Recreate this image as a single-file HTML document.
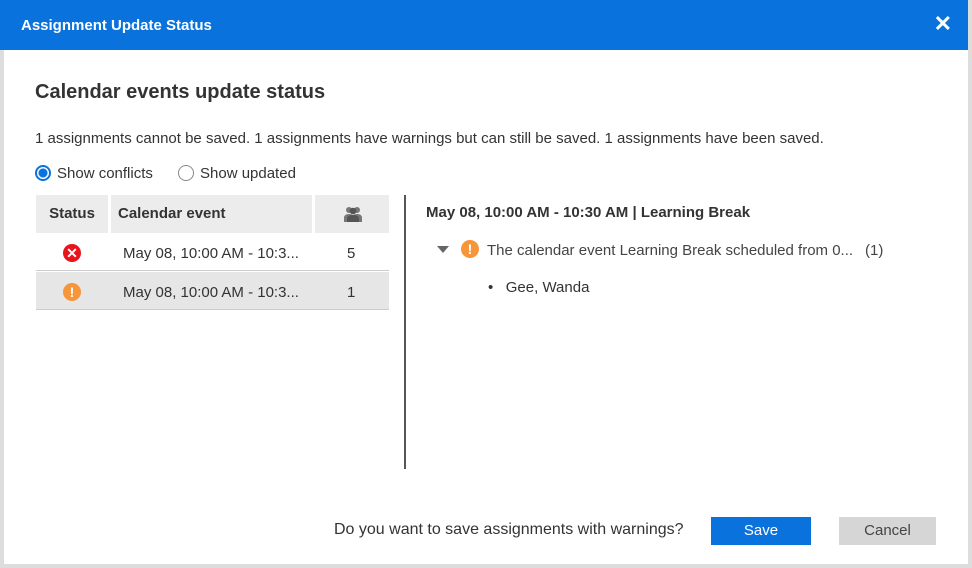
<!DOCTYPE html>
<html><head><style>
*{box-sizing:border-box;margin:0;padding:0}
body{width:972px;height:568px;background:#ddd;font-family:"Liberation Sans",sans-serif;color:#333;position:relative;overflow:hidden}
.dlg{position:absolute;left:0;top:0;width:968px;height:564px;background:#fff}
.side{position:absolute;left:0;top:50px;width:4px;height:518px;background:#ddd}
.hdr{height:50px;background:#0a72dc;color:#fff;font-weight:bold;font-size:15px;padding:17px 0 0 21px;position:relative}
.x{position:absolute;right:16px;top:14px;font-size:22px;line-height:20px}
.abs{position:absolute}
h1{position:absolute;left:35px;top:81px;font-size:20px;font-weight:bold;color:#333}
.t14{font-size:15px}
.radio{display:inline-block;width:16px;height:16px;border-radius:50%;border:1px solid #888;vertical-align:-3px;margin-right:6px}
.on{border:2px solid #0a72dc;background:radial-gradient(circle,#0a72dc 4px,#fff 5px)}
.th{background:#ececec;font-weight:bold;font-size:15px;height:38px}
.ic{display:inline-block;width:18px;height:18px;border-radius:50%;color:#fff;font-weight:bold;font-size:14px;line-height:18px;text-align:center}
.btn{position:absolute;height:28px;font-size:15px;text-align:center;line-height:28px}
</style></head><body>
<div class="dlg">
<div class="hdr">Assignment Update Status<span class="x">✕</span></div>
<h1>Calendar events update status</h1>
<div class="abs t14" style="left:35px;top:130px">1 assignments cannot be saved. 1 assignments have warnings but can still be saved. 1 assignments have been saved.</div>
<div class="abs t14" style="left:35px;top:165px"><span class="radio on"></span>Show conflicts</div>
<div class="abs t14" style="left:178px;top:165px"><span class="radio"></span>Show updated</div>
<div class="abs th" style="left:36px;top:195px;width:72px;text-align:center;line-height:38px">Status</div>
<div class="abs th" style="left:111px;top:195px;width:201px;padding-left:7px;line-height:38px">Calendar event</div>
<div class="abs th" style="left:315px;top:195px;width:74px">
<svg width="20" height="18" viewBox="0 0 20 18" style="position:absolute;left:28px;top:10px"><circle cx="6" cy="5" r="3" fill="#777"/><circle cx="14" cy="5" r="3" fill="#777"/><circle cx="10" cy="6" r="3.3" fill="#555"/><path d="M1 17v-4q0-4 5-4t5 4v4zM9 17v-4q0-4 5-4t5 4v4z" fill="#777"/><path d="M4 17v-3q0-4 6-4t6 4v3z" fill="#555"/></svg></div>
<div class="abs" style="left:36px;top:234px;width:353px;height:37px;border-bottom:1px solid #ccc"></div>
<div class="abs" style="left:36px;top:272px;width:353px;height:38px;background:#e6e6e6;border-bottom:1px solid #ccc"></div>
<span class="abs ic" style="left:63px;top:244px;background:#e8131b">✕</span>
<span class="abs ic" style="left:63px;top:283px;background:#f7953a">!</span>
<div class="abs t14" style="left:123px;top:245px">May 08, 10:00 AM - 10:3...</div>
<div class="abs t14" style="left:123px;top:284px">May 08, 10:00 AM - 10:3...</div>
<div class="abs t14" style="left:347px;top:245px">5</div>
<div class="abs t14" style="left:347px;top:284px">1</div>
<div class="abs" style="left:404px;top:195px;width:2px;height:274px;background:#555"></div>
<div class="abs t14" style="left:426px;top:204px;font-weight:bold">May 08, 10:00 AM - 10:30 AM | Learning Break</div>
<div class="abs" style="left:437px;top:246px;width:0;height:0;border-left:6px solid transparent;border-right:6px solid transparent;border-top:7px solid #666"></div>
<span class="abs ic" style="left:461px;top:240px;background:#f7953a">!</span>
<div class="abs t14" style="left:487px;top:242px;color:#444">The calendar event Learning Break scheduled from 0...</div>
<div class="abs t14" style="left:865px;top:242px;color:#444">(1)</div>
<div class="abs t14" style="left:488px;top:279px">•&nbsp;&nbsp;&nbsp;Gee, Wanda</div>
<div class="abs" style="left:334px;top:521px;font-size:16px">Do you want to save assignments with warnings?</div>
<div class="btn" style="left:711px;top:517px;width:100px;background:#0a72dc;color:#fff">Save</div>
<div class="btn" style="left:839px;top:517px;width:97px;background:#d6d6d6;color:#444">Cancel</div>
</div>
<div class="side"></div>
</body></html>
